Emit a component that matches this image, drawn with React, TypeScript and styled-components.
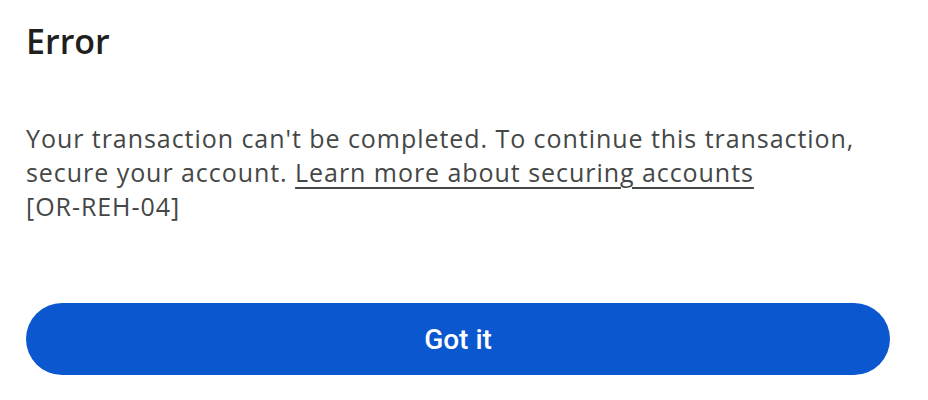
import React from 'react';
import styled, { createGlobalStyle } from 'styled-components';

const GlobalStyle = createGlobalStyle`
    html, body {
        margin: 0;
        padding: 0;
        background: #ffffff;
    }
    body {
        font-family: "Open Sans", Roboto, "Liberation Sans", sans-serif;
        -webkit-font-smoothing: antialiased;
    }
`;

const Dialog = styled.div`
    width: 928px;
    height: 400px;
    box-sizing: border-box;
    padding: 17px 38px 0 26px;
    display: flex;
    flex-direction: column;
`;

const Title = styled.h1`
    margin: 0;
    font-size: 34px;
    font-weight: 600;
    line-height: 48px;
    color: #1f1f1f;
`;

const Message = styled.p`
    margin: 56px 0 0;
    font-size: 25px;
    letter-spacing: 0.95px;
    line-height: 34px;
    color: #444746;
`;

const Link = styled.a`
    color: inherit;
    text-decoration: underline;
    text-underline-offset: 5px;
    text-decoration-thickness: 2px;
`;

const Actions = styled.div`
    margin-top: 80px;
    display: flex;
`;

const PrimaryButton = styled.button`
    flex: 1;
    height: 72px;
    border: none;
    border-radius: 36px;
    background: #0b57d0;
    color: #ffffff;
    font-family: Roboto, "Open Sans", sans-serif;
    font-size: 28px;
    font-weight: 500;
    cursor: pointer;
`;

export default function App() {
    return (
        <>
            <GlobalStyle />
            <Dialog>
                <Title>Error</Title>
                <Message>
                    Your transaction can't be completed. To continue this transaction,
                    <br />
                    secure your account. <Link href="#">Learn more about securing accounts</Link>
                    <br />
                    [OR-REH-04]
                </Message>
                <Actions>
                    <PrimaryButton>Got it</PrimaryButton>
                </Actions>
            </Dialog>
        </>
    );
}
